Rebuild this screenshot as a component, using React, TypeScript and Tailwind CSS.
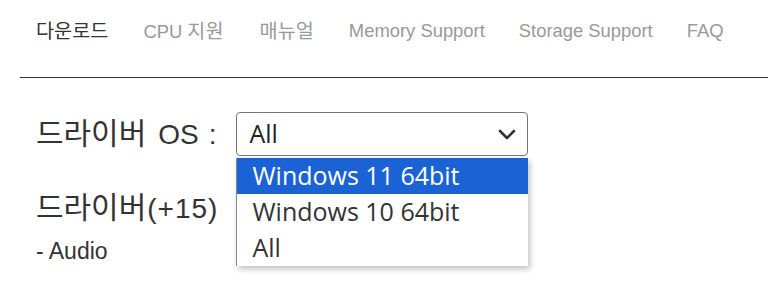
import React from "react";

const osOptions = ["Windows 11 64bit", "Windows 10 64bit", "All"];

// Hangul needs a touch more size to match the wider Korean face in the reference
function Ko({ children }: { children: React.ReactNode }) {
  return <span className="text-[1.07em]">{children}</span>;
}

export default function App() {
  return (
    <div className="w-[768px] h-[281px] overflow-hidden bg-white text-[#333] font-['Liberation_Sans','Noto_Sans_CJK_KR',sans-serif]">
      {/* Tabs */}
      <nav className="ml-5 h-[78px] border-b border-[#333] flex items-start gap-[34px] pl-4 pt-[20px] text-[18.4px] leading-[22px] whitespace-nowrap">
        <span className="text-[#333] mr-[1px]">
          <Ko>다운로드</Ko>
        </span>
        <span className="text-[#999] mr-[2px]">
          CPU <Ko>지원</Ko>
        </span>
        <span className="text-[#999] mr-[1px]">
          <Ko>매뉴얼</Ko>
        </span>
        <span className="text-[#999]">Memory Support</span>
        <span className="text-[#999]">Storage Support</span>
        <span className="text-[#999]">FAQ</span>
      </nav>

      <div className="pl-9 pt-[34px]">
        {/* OS filter */}
        <div className="flex items-center h-[44px]">
          <span className="text-[28px] leading-[32px] whitespace-nowrap">
            <Ko>드라이버</Ko>
            <span className="ml-[12px]">OS</span>
            <span className="ml-[10px]">:</span>
          </span>
          <div className="relative ml-[20px] w-[292px]">
            <div className="h-[44px] border border-[#767676] rounded-[4px] flex items-center justify-between pl-[12px] pr-[11px] font-['Open_Sans',sans-serif] text-[25px] text-[#222]">
              <span>All</span>
              <svg width="18" height="11" viewBox="0 0 18 11" fill="none">
                <path
                  d="M2 2l7 7 7-7"
                  stroke="#333"
                  strokeWidth="2.6"
                  strokeLinecap="round"
                  strokeLinejoin="round"
                />
              </svg>
            </div>
            <ul className="absolute left-0 top-[46px] w-full bg-white border-l border-[#8a8a8a] shadow-[2px_3px_6px_rgba(0,0,0,0.25)] font-['Open_Sans',sans-serif] text-[25px]">
              {osOptions.map((opt, i) => (
                <li
                  key={opt}
                  className={
                    "h-[36px] flex items-center pl-[15px] " +
                    (i === 0 ? "bg-[#1b63d4] text-white" : "text-[#333]")
                  }
                >
                  {opt}
                </li>
              ))}
            </ul>
          </div>
        </div>

        {/* Driver list */}
        <div className="mt-[36px] text-[28px] leading-[32px] whitespace-nowrap">
          <Ko>드라이버</Ko>
          <span className="ml-[1px] tracking-[1px]">(+15)</span>
        </div>
        <div className="mt-[13px] text-[23px] leading-[26px]">- Audio</div>
      </div>
    </div>
  );
}
